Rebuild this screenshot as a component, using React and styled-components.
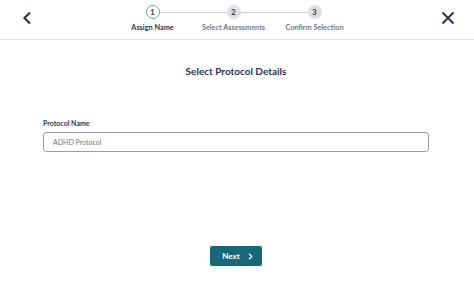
import React, {useState} from 'react';
import styled, {createGlobalStyle} from "styled-components";

const GlobalStyle = createGlobalStyle`
html, body {
margin: 0;
padding: 0;
background: #ffffff;
font-family: Lato, "Open Sans", sans-serif;
}`;

const Page = styled.div`
width: 474px;
height: 305px;
display: flex;
flex-direction: column;
background: #fff;`;

const Header = styled.header`
height: 39px;
border-bottom: 1px solid #e3e4e8;
display: flex;
align-items: flex-start;
justify-content: space-between;
padding: 0 18px 0 19px;
box-sizing: content-box;`;

const IconButton = styled.button`
border: none;
background: none;
padding: 0;
margin-top: 10px;
width: 16px;
height: 16px;
display: flex;
align-items: center;
justify-content: center;
color: #2a3550;
cursor: pointer;`;

const Stepper = styled.div`
display: flex;
align-items: flex-start;
margin-top: 5px;
margin-left: -8px;`;

const Step = styled.div`
width: 81px;
display: flex;
flex-direction: column;
align-items: center;
position: relative;`;

const Connector = styled.div`
position: absolute;
top: 7px;
left: 50%;
width: 81px;
height: 1px;
background: #cfd1d5;`;

const Circle = styled.div`
width: 14px;
height: 14px;
box-sizing: border-box;
border-radius: 50%;
border: ${p => p.$active ? "1.5px solid #52b690" : "none"};
background: ${p => p.$active ? "#fff" : "#dfe0e3"};
color: #2a3550;
font-size: 7.5px;
font-weight: 700;
display: flex;
align-items: center;
justify-content: center;
position: relative;
z-index: 1;`;

const StepLabel = styled.div`
margin-top: 4px;
font-size: 7.3px;
font-weight: 700;
white-space: nowrap;
color: ${p => p.$active ? "#2a3550" : "#737a88"};`;

const Body = styled.main`
flex: 1;
display: flex;
flex-direction: column;
padding: 0 45px 0 43px;`;

const Title = styled.h1`
margin: 25px 0 0;
text-align: center;
font-size: 10px;
font-weight: 700;
color: #2a3550;`;

const Label = styled.label`
margin-top: 42px;
font-size: 7px;
font-weight: 700;
color: #2a3550;`;

const Input = styled.input`
margin-top: 5px;
height: 20px;
box-sizing: border-box;
border: 1px solid #9a9ea6;
border-radius: 3px;
padding: 0 9px;
font-family: inherit;
font-size: 7px;
color: #737a88;
outline: none;`;

const Footer = styled.div`
display: flex;
justify-content: center;
margin-top: 94px;`;

const NextButton = styled.button`
width: 52px;
height: 20px;
border: none;
border-radius: 2px;
background: #17697a;
color: #fff;
font-family: inherit;
font-size: 8px;
font-weight: 700;
display: flex;
align-items: center;
justify-content: center;
gap: 8px;
padding: 0 0 0 3px;
cursor: pointer;`;

const steps = ["Assign Name", "Select Assessments", "Confirm Selection"];

const App = () => {
    const [name, setName] = useState("ADHD Protocol");
    const current = 0;

    return (
        <>
            <GlobalStyle/>
            <Page>
                <Header>
                    <IconButton aria-label="Back">
                        <svg width="10" height="14" viewBox="0 0 10 14" fill="none">
                            <path d="M8 1.5L2.5 7L8 12.5" stroke="currentColor" strokeWidth="2.2"/>
                        </svg>
                    </IconButton>
                    <Stepper>
                        {steps.map((s, i) => (
                            <Step key={s}>
                                {i < steps.length - 1 && <Connector/>}
                                <Circle $active={i === current}>{i + 1}</Circle>
                                <StepLabel $active={i === current}>{s}</StepLabel>
                            </Step>
                        ))}
                    </Stepper>
                    <IconButton aria-label="Close">
                        <svg width="14" height="14" viewBox="0 0 14 14" fill="none">
                            <path d="M1.5 1.5L12.5 12.5M12.5 1.5L1.5 12.5" stroke="currentColor" strokeWidth="2"/>
                        </svg>
                    </IconButton>
                </Header>
                <Body>
                    <Title>Select Protocol Details</Title>
                    <Label>Protocol Name</Label>
                    <Input value={name} onChange={(e) => setName(e.target.value)}/>
                    <Footer>
                        <NextButton>
                            Next
                            <svg width="5" height="7" viewBox="0 0 5 7" fill="none">
                                <path d="M1 0.8L3.8 3.5L1 6.2" stroke="currentColor" strokeWidth="1.2"/>
                            </svg>
                        </NextButton>
                    </Footer>
                </Body>
            </Page>
        </>
    );
};

export default App;
